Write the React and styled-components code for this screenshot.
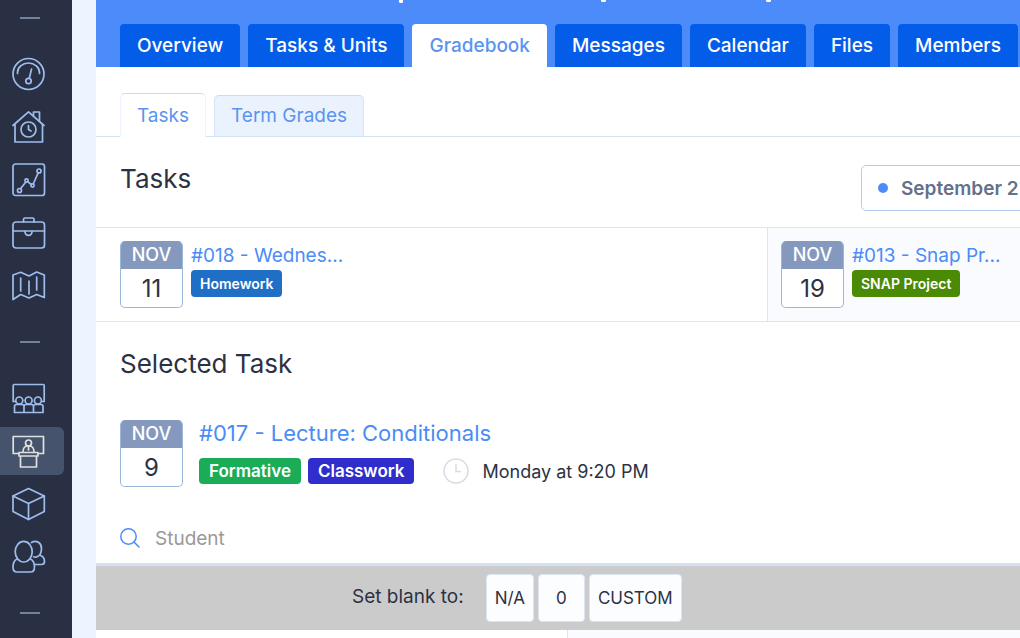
import React from 'react';
import styled, { createGlobalStyle } from 'styled-components';

const GlobalStyle = createGlobalStyle`
  * {
    box-sizing: border-box;
  }

  body {
    margin: 0;
    font-family: Inter, "Liberation Sans", sans-serif;
    color: #2c3244;
    background-color: #fff;
  }

  button,
  input {
    font-family: inherit;
    color: inherit;
  }
`;

// Layout
const Page = styled.div`
  display: flex;
  height: 100vh;
  overflow: hidden;
`;

const Sidebar = styled.nav`
  flex: 0 0 72px;
  background-color: #2a3044;
  padding-top: 17px;
  overflow: hidden;
`;

const Gutter = styled.div`
  flex: 0 0 24px;
  background-color: #eef4ff;
`;

const Main = styled.main`
  flex: 1;
  min-width: 0;
  display: flex;
  flex-direction: column;
  overflow: hidden;
`;

// Sidebar
const Divider = styled.hr`
  width: 20px;
  height: 2px;
  margin: 0 0 0 20px;
  border: none;
  background-color: #71839f;
`;

const NavList = styled.ul`
  list-style: none;
  margin: 0;
  padding: 31px 8px 31px 0;
  display: flex;
  flex-direction: column;
  gap: 5px;
`;

const NavLink = styled.a`
  display: flex;
  align-items: center;
  height: 48px;
  padding-left: 12px;
  border-radius: 0 6px 6px 0;
  color: ${({ $active }) => ($active ? '#dfe1e0' : '#9dbdee')};
  background-color: ${({ $active }) => ($active ? '#46536c' : 'transparent')};
`;

const NavIcon = styled.svg`
  width: 34px;
  height: 34px;
  fill: none;
  stroke: currentColor;
  stroke-width: 1.7;
  stroke-linecap: round;
  stroke-linejoin: round;
`;

// Header
const Header = styled.header`
  flex: none;
  padding: 0 24px;
  background-color: #4b8cfa;
`;

const HeaderMarks = styled.svg`
  display: block;
  width: 100%;
  height: 24px;
  fill: #fff;
`;

const Tabs = styled.nav`
  display: flex;
  gap: 8px;
`;

const Tab = styled.a`
  flex: none;
  padding: 0 17px;
  line-height: 43px;
  font-size: 19px;
  font-weight: 500;
  text-decoration: none;
  border-radius: 4px 4px 0 0;
  color: ${({ $active }) => ($active ? '#5b94f0' : '#fff')};
  background-color: ${({ $active }) => ($active ? '#fff' : '#045de9')};
`;

const SubTabs = styled.nav`
  flex: none;
  display: flex;
  align-items: flex-end;
  gap: 8px;
  padding: 26px 24px 0;
  box-shadow: inset 0 -1px 0 #d5e3f6;
`;

const SubTab = styled.a`
  padding: 0 16px;
  line-height: ${({ $active }) => ($active ? '43px' : '40px')};
  font-size: 19px;
  text-decoration: none;
  color: #5b94ee;
  border: 1px solid ${({ $active }) => ($active ? '#edf3fc' : '#d5e3f6')};
  border-top-color: #c9dcf6;
  border-bottom: ${({ $active }) => ($active ? 'none' : '1px solid #d5e3f6')};
  border-radius: 5px 5px 0 0;
  background-color: ${({ $active }) => ($active ? '#fff' : '#eaf2fd')};
`;

// Tasks
const SectionBar = styled.div`
  flex: none;
  display: flex;
  justify-content: space-between;
  align-items: flex-start;
  height: 90px;
  padding: 28px 0 0 24px;
`;

const SectionTitle = styled.h2`
  margin: 0;
  line-height: 28px;
  font-size: 26px;
  font-weight: 400;
`;

const TermClip = styled.div`
  width: 159px;
  overflow: hidden;
`;

const TermButton = styled.button`
  display: flex;
  align-items: center;
  gap: 13px;
  height: 46px;
  padding: 0 16px;
  font-size: 19px;
  font-weight: 600;
  white-space: nowrap;
  color: #64718b;
  background-color: #fff;
  border: 1px solid #b4cced;
  border-radius: 5px;
`;

const Dot = styled.span`
  width: 10px;
  height: 10px;
  border-radius: 50%;
  background-color: #4b8cfa;
`;

const TaskStrip = styled.div`
  flex: none;
  display: flex;
  overflow: hidden;
  border: 1px solid #d8e6f7;
  border-width: 1px 0;
`;

const TaskCell = styled.article`
  flex: 0 0 672px;
  display: flex;
  gap: 8px;
  padding: 13px 13px 13px 24px;
  border-right: 1px solid #d8e6f7;

  & + & {
    padding-left: 13px;
    background-color: #f9fbfe;
  }
`;

const DateCard = styled.time`
  flex: none;
  width: 63px;
  height: 67px;
  text-align: center;
  border: 1px solid #9cb6da;
  border-top: none;
  border-radius: 5px;
  background-color: #fff;
  overflow: hidden;
`;

const Month = styled.span`
  display: block;
  margin: 0 -1px;
  line-height: 28px;
  font-size: 18px;
  font-weight: 500;
  color: #fff;
  background-color: #8599be;
`;

const Day = styled.span`
  display: block;
  line-height: 39px;
  font-size: 24px;
`;

const TaskLink = styled.a`
  display: block;
  line-height: ${({ $large }) => ($large ? '26px' : '29px')};
  font-size: ${({ $large }) => ($large ? '22px' : '19px')};
  text-decoration: none;
  color: #4b8cf5;
`;

const Tag = styled.span`
  display: inline-block;
  padding: ${({ $large }) => ($large ? '0 10px' : '0 9px')};
  line-height: ${({ $large }) => ($large ? '26px' : '27px')};
  font-size: ${({ $large }) => ($large ? '17px' : '14px')};
  font-weight: 600;
  color: #fff;
  border-radius: 4px;
  background-color: ${({ $color }) => $color};
`;

// Selected task
const Selected = styled.section`
  flex: none;
  padding: 28px 24px 0;
`;

const SelectedTask = styled.div`
  display: flex;
  gap: 16px;
  margin-top: 42px;
`;

const Meta = styled.div`
  display: flex;
  align-items: center;
  gap: 7px;
  margin-top: 12px;
`;

const Due = styled.span`
  display: flex;
  align-items: center;
  gap: 13px;
  margin-left: 22px;
  font-size: 18px;
`;

const ClockIcon = styled.svg`
  width: 26px;
  height: 26px;
  fill: none;
  stroke: #d8dbe2;
  stroke-width: 1.5;
`;

const Search = styled.label`
  display: flex;
  align-items: center;
  gap: 15px;
  height: 50px;
  margin-top: 26px;
`;

const SearchIcon = styled.svg`
  width: 20px;
  height: 20px;
  fill: none;
  stroke: #4b8cfa;
  stroke-width: 1.5;
  stroke-linecap: round;
`;

const SearchInput = styled.input`
  flex: 1;
  padding: 0;
  font-size: 19px;
  border: none;
  outline: none;
  background: transparent;

  &::placeholder {
    color: #999;
    opacity: 1;
  }
`;

// Blank scores bar
const BlankBar = styled.div`
  flex: none;
  display: flex;
  gap: 4px;
  padding: 8px 24px 8px 256px;
  border-top: 3px solid #d3e1f3;
  background-color: #cbcbcb;
`;

const BlankLabel = styled.span`
  margin-right: 18px;
  line-height: 45px;
  font-size: 19px;
`;

const BlankButton = styled.button`
  min-width: 47px;
  height: 48px;
  padding: 0 8px;
  font-size: 17px;
  border: 1px solid #dbe5f3;
  border-radius: 4px;
  background-color: #fcfdfe;
`;

const Scores = styled.div`
  flex: 1;
  display: grid;
  grid-template-columns: 471px 1fr;
`;

const ScoreCell = styled.div`
  & + & {
    border-left: 1px solid #d8e6f7;
    background-color: #f9fbfe;
  }
`;

const icons = {
  dashboard: (
    <>
      <circle cx="16.5" cy="17" r="15.5" />
      <path d="M5.5 16.5v-1a11 9.5 0 0 1 22 0v1" />
      <circle cx="16.5" cy="24" r="2.7" />
      <path d="M17.3 21.2l2.2-9" />
    </>
  ),
  home: (
    <>
      <path d="M3 14.5V32h27.5V14.5" />
      <path d="M1 15.5L16.5 1.8 32 15.5" />
      <path d="M21.5 6V2h6v9" />
      <circle cx="16.5" cy="19.5" r="7.5" />
      <path d="M16.5 15.5v4l2.5 1.5" />
    </>
  ),
  chart: (
    <>
      <rect x="1" y="1" width="31.5" height="31.5" rx="2.5" />
      <circle cx="7.5" cy="27.5" r="2" />
      <circle cx="14.5" cy="17.5" r="1.6" />
      <circle cx="20.5" cy="22.5" r="1.6" />
      <circle cx="27" cy="8" r="2" />
      <path d="M8.5 25.7l5.3-6.8M15.7 18.6l3.6 2.9M21.2 21l5-11.2" />
    </>
  ),
  briefcase: (
    <>
      <rect x="1" y="6" width="31.5" height="26" rx="3" />
      <path d="M11.5 6V3.5q0-1.5 1.5-1.5h7.5Q22 2 22 3.5V6" />
      <path d="M1 15h11.7M20.3 15h12.2M13 15h7v.8a3.5 3.5 0 0 1-7 0z" />
    </>
  ),
  map: (
    <>
      <path d="M1 6L8.7 3.3 17 7l7.7-4L32.3 6v22.5L24.7 25.5 17 29l-8.3-3.5L1 30.5z" />
      <path d="M8.7 9v13M17 12v13M24.7 8v13" />
    </>
  ),
  classes: (
    <>
      <path d="M3.5 20.5H1.2V4.5q0-1 1-1h29q1 0 1 1v16h-2" />
      <circle cx="7.3" cy="19.5" r="3.5" />
      <circle cx="16.6" cy="19.5" r="3.5" />
      <circle cx="25.9" cy="19.5" r="3.5" />
      <path d="M2.5 31.5v-6q0-2 2-2h5.5q2 0 2 2v6zM12 31.5v-6q0-2 2-2h5.5q2 0 2 2v6zM21.5 31.5v-6q0-2 2-2H29q2 0 2 2v6z" />
    </>
  ),
  teaching: (
    <>
      <path d="M6 19.5H1.2v-17h30.3v17h-5" />
      <circle cx="16.5" cy="9" r="3" />
      <path d="M11 18c0-4 1.5-5.5 4-6h3c2.5.5 4 2 4 6" />
      <path d="M16.5 13v3" />
      <path d="M7 18.5h19V22H7zM8.5 22h16v11h-16z" />
    </>
  ),
  resources: (
    <>
      <path d="M16.5 1.5L32.3 9v15.5L16.5 32.5 1 24.5V9z" />
      <path d="M1 9l15.5 7.5L32.3 9M16.5 16.5v16" />
    </>
  ),
  people: (
    <>
      <ellipse cx="11.7" cy="11.7" rx="8.5" ry="10.3" />
      <path d="M5 19c-3 1.5-4 4-4 8 0 3.5 1.5 5 4 5h13.5c2.5 0 4-1.5 4-5 0-4-1-6.5-4-8" />
      <path d="M19.5 2.5c5-3 10 .5 10 6 0 4-2 7.5-5 8.5-1.2.4-2 .2-2.8-.2" />
      <path d="M28.5 15.5c2.5 1 4 3 4 6 0 2-1 3-3 3H23" />
    </>
  ),
};

const navTop = ['dashboard', 'home', 'chart', 'briefcase', 'map'];
const navBottom = ['classes', 'teaching', 'resources', 'people'];

const tabs = ['Overview', 'Tasks & Units', 'Gradebook', 'Messages', 'Calendar', 'Files', 'Members'];

const tasks = [
  { id: 18, day: 11, title: '#018 - Wednes...', tag: 'Homework', color: '#1f6fc6' },
  { id: 13, day: 19, title: '#013 - Snap Pr...', tag: 'SNAP Project', color: '#4a8a05' },
];

const NavGroup = ({ items, active }) => (
  <NavList>
    {items.map((name) => (
      <li key={name}>
        <NavLink href="#" aria-label={name} $active={name === active}>
          <NavIcon viewBox="0 0 34 34">{icons[name]}</NavIcon>
        </NavLink>
      </li>
    ))}
  </NavList>
);

const DateBox = ({ month, day }) => (
  <DateCard>
    <Month>{month}</Month>
    <Day>{day}</Day>
  </DateCard>
);

const App = () => {
  return (
    <Page>
      <GlobalStyle />
      <Sidebar>
        <Divider />
        <NavGroup items={navTop} />
        <Divider />
        <NavGroup items={navBottom} active="teaching" />
        <Divider />
      </Sidebar>
      <Gutter />
      <Main>
        <Header>
          <HeaderMarks aria-hidden="true">
            <rect x="279" y="-2" width="4" height="5" rx="1.5" />
            <rect x="481" y="-2" width="5" height="4" rx="1.5" />
            <rect x="646" y="-2" width="5" height="4" rx="1.5" />
          </HeaderMarks>
          <Tabs>
            {tabs.map((tab) => (
              <Tab key={tab} href="#" $active={tab === 'Gradebook'}>{tab}</Tab>
            ))}
          </Tabs>
        </Header>
        <SubTabs>
          <SubTab href="#" $active>Tasks</SubTab>
          <SubTab href="#">Term Grades</SubTab>
        </SubTabs>

        <SectionBar>
          <SectionTitle>Tasks</SectionTitle>
          <TermClip>
            <TermButton type="button">
              <Dot />
              September 2
            </TermButton>
          </TermClip>
        </SectionBar>
        <TaskStrip>
          {tasks.map((task) => (
            <TaskCell key={task.id}>
              <DateBox month="NOV" day={task.day} />
              <div>
                <TaskLink href="#">{task.title}</TaskLink>
                <Tag $color={task.color}>{task.tag}</Tag>
              </div>
            </TaskCell>
          ))}
        </TaskStrip>

        <Selected>
          <SectionTitle>Selected Task</SectionTitle>
          <SelectedTask>
            <DateBox month="NOV" day={9} />
            <div>
              <TaskLink href="#" $large>#017 - Lecture: Conditionals</TaskLink>
              <Meta>
                <Tag $large $color="#1bac58">Formative</Tag>
                <Tag $large $color="#2f2dcb">Classwork</Tag>
                <Due>
                  <ClockIcon viewBox="0 0 26 26">
                    <circle cx="13" cy="13" r="12" />
                    <path d="M13 6v7.5h5" />
                  </ClockIcon>
                  Monday at 9:20 PM
                </Due>
              </Meta>
            </div>
          </SelectedTask>
          <Search>
            <SearchIcon viewBox="0 0 20 20">
              <circle cx="8.5" cy="8.5" r="7.7" />
              <path d="M14 14l5 5" />
            </SearchIcon>
            <SearchInput type="text" placeholder="Student" aria-label="Student" />
          </Search>
        </Selected>

        <BlankBar>
          <BlankLabel>Set blank to:</BlankLabel>
          <BlankButton type="button">N/A</BlankButton>
          <BlankButton type="button">0</BlankButton>
          <BlankButton type="button">CUSTOM</BlankButton>
        </BlankBar>
        <Scores>
          <ScoreCell />
          <ScoreCell />
        </Scores>
      </Main>
    </Page>
  );
};

export default App;
